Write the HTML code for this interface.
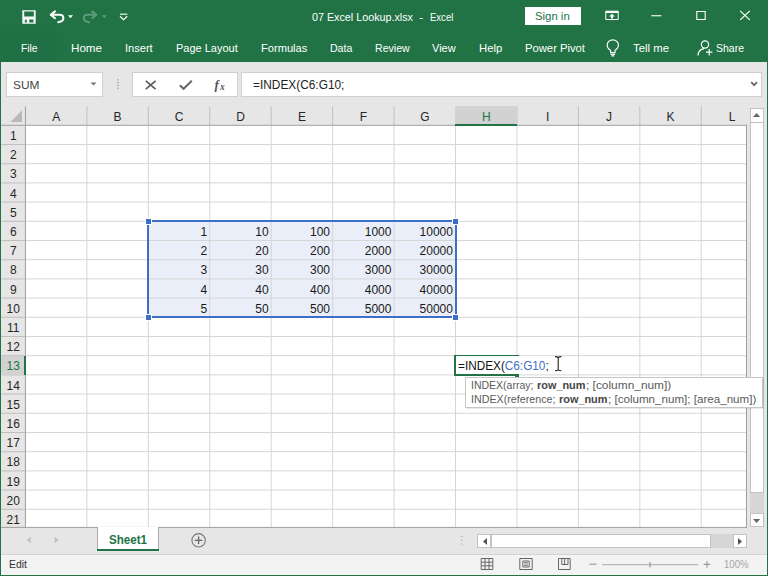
<!DOCTYPE html>
<html><head><meta charset="utf-8"><title>07 Excel Lookup.xlsx - Excel</title>
<style>
html,body{margin:0;padding:0;}
body{width:768px;height:576px;overflow:hidden;background:#e6e6e6;font-family:"Liberation Sans",sans-serif;position:relative;}
.abs,.t,.hl,.ch,.rh,.num{position:absolute;}
.t{white-space:nowrap;line-height:16px;transform-origin:0 0;}
.hl{background:#d6d6d6;}
.ch{height:16px;font-size:12px;line-height:16px;text-align:center;color:#262626;}
.rh{left:1.3px;width:24px;font-size:12px;line-height:16px;text-align:center;color:#262626;}
.num{font-size:12px;line-height:16px;text-align:right;color:#1a1a1a;white-space:nowrap;}
svg{position:absolute;overflow:visible;}
</style></head><body>

<div class="abs" style="left:0;top:0;width:768px;height:61.5px;background:#217346;"></div>
<div class="abs" style="left:1.3px;top:31px;width:56px;height:30.5px;background:#1f7044;"></div>
<div class="abs" style="left:525.3px;top:6.7px;width:55.4px;height:18px;background:#fff;"></div>
<div class="abs" style="left:6px;top:72px;width:97px;height:25px;background:#fff;border:1px solid #cfcfcf;box-sizing:border-box;"></div>
<div class="abs" style="left:132px;top:72px;width:106px;height:25px;background:#fff;border:1px solid #cfcfcf;box-sizing:border-box;"></div>
<div class="abs" style="left:241px;top:72px;width:521px;height:25px;background:#fff;border:1px solid #cfcfcf;box-sizing:border-box;"></div>
<div class="abs" style="left:25.44px;top:125.3px;width:721.06px;height:402.09999999999997px;background:#fff;"></div>
<div class="abs" style="left:148.32px;top:221.3px;width:307.2px;height:96.0px;background:#e9eef8;"></div>
<svg style="left:0;top:0" width="768" height="576" viewBox="0 0 768 576"><g stroke="#d4d4d4" stroke-width="0.96" fill="none"><path d="M86.88 125.3V527.4"/><path d="M148.32 125.3V527.4"/><path d="M209.76 125.3V527.4"/><path d="M271.20 125.3V527.4"/><path d="M332.64 125.3V527.4"/><path d="M394.08 125.3V527.4"/><path d="M455.52 125.3V527.4"/><path d="M516.96 125.3V527.4"/><path d="M578.40 125.3V527.4"/><path d="M639.84 125.3V527.4"/><path d="M701.28 125.3V527.4"/><path d="M25.44 144.50H746.5"/><path d="M25.44 163.70H746.5"/><path d="M25.44 182.90H746.5"/><path d="M25.44 202.10H746.5"/><path d="M25.44 221.30H746.5"/><path d="M25.44 240.50H746.5"/><path d="M25.44 259.70H746.5"/><path d="M25.44 278.90H746.5"/><path d="M25.44 298.10H746.5"/><path d="M25.44 317.30H746.5"/><path d="M25.44 336.50H746.5"/><path d="M25.44 355.70H746.5"/><path d="M25.44 374.90H746.5"/><path d="M25.44 394.10H746.5"/><path d="M25.44 413.30H746.5"/><path d="M25.44 432.50H746.5"/><path d="M25.44 451.70H746.5"/><path d="M25.44 470.90H746.5"/><path d="M25.44 490.10H746.5"/><path d="M25.44 509.30H746.5"/></g><g stroke="#9f9f9f" stroke-width="1" fill="none"><path d="M1.3 125.3H746.5"/><path d="M25.44 106.5V527.4"/><path d="M746.5 124.8V527.9"/><path d="M1.3 527.4H746.5"/></g><g stroke="#bdbdbd" stroke-width="0.96" fill="none"><path d="M86.88 106.5V125.3"/><path d="M148.32 106.5V125.3"/><path d="M209.76 106.5V125.3"/><path d="M271.20 106.5V125.3"/><path d="M332.64 106.5V125.3"/><path d="M394.08 106.5V125.3"/><path d="M455.52 106.5V125.3"/><path d="M516.96 106.5V125.3"/><path d="M578.40 106.5V125.3"/><path d="M639.84 106.5V125.3"/><path d="M701.28 106.5V125.3"/><path d="M1.3 144.50H25.44"/><path d="M1.3 163.70H25.44"/><path d="M1.3 182.90H25.44"/><path d="M1.3 202.10H25.44"/><path d="M1.3 221.30H25.44"/><path d="M1.3 240.50H25.44"/><path d="M1.3 259.70H25.44"/><path d="M1.3 278.90H25.44"/><path d="M1.3 298.10H25.44"/><path d="M1.3 317.30H25.44"/><path d="M1.3 336.50H25.44"/><path d="M1.3 355.70H25.44"/><path d="M1.3 374.90H25.44"/><path d="M1.3 394.10H25.44"/><path d="M1.3 413.30H25.44"/><path d="M1.3 432.50H25.44"/><path d="M1.3 451.70H25.44"/><path d="M1.3 470.90H25.44"/><path d="M1.3 490.10H25.44"/><path d="M1.3 509.30H25.44"/></g></svg>
<div class="abs" style="left:455.21999999999997px;top:106.3px;width:61.739999999999995px;height:18px;background:#d2d2d2;"></div>
<div class="abs" style="left:455.21999999999997px;top:124px;width:61.739999999999995px;height:1.8px;background:#217346;"></div>
<div class="ch" style="left:25.44px;top:108.54px;width:61.44px;color:#262626">A</div>
<div class="ch" style="left:86.88px;top:108.54px;width:61.44px;color:#262626">B</div>
<div class="ch" style="left:148.32px;top:108.54px;width:61.44px;color:#262626">C</div>
<div class="ch" style="left:209.76px;top:108.54px;width:61.44px;color:#262626">D</div>
<div class="ch" style="left:271.20px;top:108.54px;width:61.44px;color:#262626">E</div>
<div class="ch" style="left:332.64px;top:108.54px;width:61.44px;color:#262626">F</div>
<div class="ch" style="left:394.08px;top:108.54px;width:61.44px;color:#262626">G</div>
<div class="ch" style="left:455.52px;top:108.54px;width:61.44px;color:#217346">H</div>
<div class="ch" style="left:516.96px;top:108.54px;width:61.44px;color:#262626">I</div>
<div class="ch" style="left:578.40px;top:108.54px;width:61.44px;color:#262626">J</div>
<div class="ch" style="left:639.84px;top:108.54px;width:61.44px;color:#262626">K</div>
<div class="ch" style="left:701.28px;top:108.54px;width:61.44px;color:#262626">L</div>
<svg style="left:10px;top:110px" width="13" height="13" viewBox="0 0 13 13"><path d="M12 0.5V12H0.5Z" fill="#b8b8b8"/></svg>
<div class="abs" style="left:1.3px;top:355.7px;width:23px;height:19.2px;background:#d2d2d2;"></div>
<div class="abs" style="left:24px;top:355.7px;width:1.8px;height:19.2px;background:#217346;"></div>
<div class="rh" style="top:127.94px;color:#262626">1</div>
<div class="rh" style="top:147.14px;color:#262626">2</div>
<div class="rh" style="top:166.34px;color:#262626">3</div>
<div class="rh" style="top:185.54px;color:#262626">4</div>
<div class="rh" style="top:204.74px;color:#262626">5</div>
<div class="rh" style="top:223.94px;color:#262626">6</div>
<div class="rh" style="top:243.14px;color:#262626">7</div>
<div class="rh" style="top:262.34px;color:#262626">8</div>
<div class="rh" style="top:281.54px;color:#262626">9</div>
<div class="rh" style="top:300.74px;color:#262626">10</div>
<div class="rh" style="top:319.94px;color:#262626">11</div>
<div class="rh" style="top:339.14px;color:#262626">12</div>
<div class="rh" style="top:358.34px;color:#217346">13</div>
<div class="rh" style="top:377.54px;color:#262626">14</div>
<div class="rh" style="top:396.74px;color:#262626">15</div>
<div class="rh" style="top:415.94px;color:#262626">16</div>
<div class="rh" style="top:435.14px;color:#262626">17</div>
<div class="rh" style="top:454.34px;color:#262626">18</div>
<div class="rh" style="top:473.54px;color:#262626">19</div>
<div class="rh" style="top:492.74px;color:#262626">20</div>
<div class="rh" style="top:511.94px;color:#262626">21</div>
<div class="num" style="left:148.32px;width:58.839999999999996px;top:223.94px;">1</div>
<div class="num" style="left:209.76px;width:58.839999999999996px;top:223.94px;">10</div>
<div class="num" style="left:271.20px;width:58.839999999999996px;top:223.94px;">100</div>
<div class="num" style="left:332.64px;width:58.839999999999996px;top:223.94px;">1000</div>
<div class="num" style="left:394.08px;width:58.839999999999996px;top:223.94px;">10000</div>
<div class="num" style="left:148.32px;width:58.839999999999996px;top:243.14px;">2</div>
<div class="num" style="left:209.76px;width:58.839999999999996px;top:243.14px;">20</div>
<div class="num" style="left:271.20px;width:58.839999999999996px;top:243.14px;">200</div>
<div class="num" style="left:332.64px;width:58.839999999999996px;top:243.14px;">2000</div>
<div class="num" style="left:394.08px;width:58.839999999999996px;top:243.14px;">20000</div>
<div class="num" style="left:148.32px;width:58.839999999999996px;top:262.34px;">3</div>
<div class="num" style="left:209.76px;width:58.839999999999996px;top:262.34px;">30</div>
<div class="num" style="left:271.20px;width:58.839999999999996px;top:262.34px;">300</div>
<div class="num" style="left:332.64px;width:58.839999999999996px;top:262.34px;">3000</div>
<div class="num" style="left:394.08px;width:58.839999999999996px;top:262.34px;">30000</div>
<div class="num" style="left:148.32px;width:58.839999999999996px;top:281.54px;">4</div>
<div class="num" style="left:209.76px;width:58.839999999999996px;top:281.54px;">40</div>
<div class="num" style="left:271.20px;width:58.839999999999996px;top:281.54px;">400</div>
<div class="num" style="left:332.64px;width:58.839999999999996px;top:281.54px;">4000</div>
<div class="num" style="left:394.08px;width:58.839999999999996px;top:281.54px;">40000</div>
<div class="num" style="left:148.32px;width:58.839999999999996px;top:300.74px;">5</div>
<div class="num" style="left:209.76px;width:58.839999999999996px;top:300.74px;">50</div>
<div class="num" style="left:271.20px;width:58.839999999999996px;top:300.74px;">500</div>
<div class="num" style="left:332.64px;width:58.839999999999996px;top:300.74px;">5000</div>
<div class="num" style="left:394.08px;width:58.839999999999996px;top:300.74px;">50000</div>
<div class="abs" style="left:146.92px;top:219.9px;width:309.59999999999997px;height:98.4px;border:2px solid #3f6fc4;box-sizing:border-box;"></div>
<div class="abs" style="left:144.82px;top:217.8px;width:7px;height:7px;background:#3f6fc4;border:0.8px solid #fff;box-sizing:border-box;"></div>
<div class="abs" style="left:452.02px;top:217.8px;width:7px;height:7px;background:#3f6fc4;border:0.8px solid #fff;box-sizing:border-box;"></div>
<div class="abs" style="left:144.82px;top:313.8px;width:7px;height:7px;background:#3f6fc4;border:0.8px solid #fff;box-sizing:border-box;"></div>
<div class="abs" style="left:452.02px;top:313.8px;width:7px;height:7px;background:#3f6fc4;border:0.8px solid #fff;box-sizing:border-box;"></div>
<div class="abs" style="left:456.02px;top:356.2px;width:100px;height:18.2px;background:#fff;"></div>
<div class="abs" style="left:454.21999999999997px;top:354.7px;width:64.3px;height:1.8px;background:#217346;"></div>
<div class="abs" style="left:454.21999999999997px;top:373.9px;width:60.7px;height:1.8px;background:#217346;"></div>
<div class="abs" style="left:454.21999999999997px;top:354.7px;width:1.9px;height:21.0px;background:#217346;"></div>
<div class="abs" style="left:514.7px;top:374.3px;width:4.6px;height:3px;background:#217346;"></div>
<div class="abs" style="left:750px;top:108.3px;width:13.7px;height:419.2px;background:#d6d6d6;"></div>
<div class="abs" style="left:750px;top:108.3px;width:13.7px;height:14.5px;background:#fff;border:1px solid #c2c2c2;box-sizing:border-box;"></div>
<div class="abs" style="left:750px;top:122.3px;width:13.7px;height:370.4px;background:#fff;border:1px solid #c2c2c2;box-sizing:border-box;"></div>
<div class="abs" style="left:750px;top:513.3px;width:13.7px;height:14.2px;background:#fff;border:1px solid #c2c2c2;box-sizing:border-box;"></div>
<svg style="left:753.3px;top:113px" width="7.2" height="4" viewBox="0 0 7.2 4"><path d="M0 4L3.6 0L7.2 4Z" fill="#666"/></svg>
<svg style="left:753.3px;top:518.7px" width="7.2" height="4" viewBox="0 0 7.2 4"><path d="M0 0L3.6 4L7.2 0Z" fill="#666"/></svg>
<div class="abs" style="left:465.3px;top:377.3px;width:298.2px;height:30.7px;background:#fff;border:1px solid #c6c6c6;box-sizing:border-box;box-shadow:0.5px 0.5px 1.5px rgba(0,0,0,.25);"></div>
<div class="abs" style="left:97.2px;top:526.6999999999999px;width:61.8px;height:22px;background:#fff;border-left:1px solid #ababab;border-right:1px solid #ababab;box-sizing:border-box;"></div>
<div class="abs" style="left:97.2px;top:548.7px;width:61.8px;height:2.1px;background:#217346;"></div>
<div class="abs" style="left:1.3px;top:553.5px;width:765.4px;height:1.2px;background:#d4d4d4;"></div>
<div class="abs" style="left:1.3px;top:554.5px;width:765.4px;height:20.2px;background:#f3f3f3;"></div>
<div class="abs" style="left:477.3px;top:534px;width:269.4px;height:14px;background:#d6d6d6;"></div>
<div class="abs" style="left:477.3px;top:534px;width:14px;height:14px;background:#fff;border:1px solid #c2c2c2;box-sizing:border-box;"></div>
<div class="abs" style="left:490.8px;top:534px;width:220px;height:14px;background:#fff;border:1px solid #c2c2c2;box-sizing:border-box;"></div>
<div class="abs" style="left:732.7px;top:534px;width:14px;height:14px;background:#fff;border:1px solid #c2c2c2;box-sizing:border-box;"></div>
<svg style="left:482.5px;top:537.5px" width="4" height="7" viewBox="0 0 4 7"><path d="M4 0L0 3.5L4 7Z" fill="#555"/></svg>
<svg style="left:738px;top:537.5px" width="4" height="7" viewBox="0 0 4 7"><path d="M0 0L4 3.5L0 7Z" fill="#555"/></svg>
<div class="t" style="left:20.70px;top:40.05px;font-size:11.4px;color:#fff;font-weight:400;transform:scaleX(0.9042)">File</div>
<div class="t" style="left:70.70px;top:40.05px;font-size:11.4px;color:#fff;font-weight:400;transform:scaleX(1.0201)">Home</div>
<div class="t" style="left:125.00px;top:40.05px;font-size:11.4px;color:#fff;font-weight:400;transform:scaleX(0.9719)">Insert</div>
<div class="t" style="left:176.00px;top:40.05px;font-size:11.4px;color:#fff;font-weight:400;transform:scaleX(0.9645)">Page Layout</div>
<div class="t" style="left:260.70px;top:40.05px;font-size:11.4px;color:#fff;font-weight:400;transform:scaleX(0.9751)">Formulas</div>
<div class="t" style="left:330.00px;top:40.05px;font-size:11.4px;color:#fff;font-weight:400;transform:scaleX(0.9268)">Data</div>
<div class="t" style="left:375.00px;top:40.05px;font-size:11.4px;color:#fff;font-weight:400;transform:scaleX(0.9288)">Review</div>
<div class="t" style="left:432.00px;top:40.05px;font-size:11.4px;color:#fff;font-weight:400;transform:scaleX(0.9680)">View</div>
<div class="t" style="left:478.70px;top:40.05px;font-size:11.4px;color:#fff;font-weight:400;transform:scaleX(0.9941)">Help</div>
<div class="t" style="left:524.70px;top:40.05px;font-size:11.4px;color:#fff;font-weight:400;transform:scaleX(0.9871)">Power Pivot</div>
<div class="t" style="left:632.70px;top:40.05px;font-size:11.4px;color:#fff;font-weight:400;transform:scaleX(0.9974)">Tell me</div>
<div class="t" style="left:716.00px;top:40.05px;font-size:11.4px;color:#fff;font-weight:400;transform:scaleX(0.9209)">Share</div>
<div class="t" style="left:312.00px;top:8.78px;font-size:11.3px;color:#fff;font-weight:400;transform:scaleX(0.9517)">07 Excel Lookup.xlsx</div>
<div class="t" style="left:418.70px;top:8.78px;font-size:11.3px;color:#fff;font-weight:400;transform:scaleX(1.1419)">-</div>
<div class="t" style="left:430.00px;top:8.78px;font-size:11.3px;color:#fff;font-weight:400;transform:scaleX(0.8434)">Excel</div>
<div class="t" style="left:535.30px;top:8.05px;font-size:11.4px;color:#217346;font-weight:400;transform:scaleX(0.9959)">Sign in</div>
<div class="t" style="left:12.50px;top:77.05px;font-size:11.4px;color:#444;font-weight:400;transform:scaleX(1.0469)">SUM</div>
<div class="t" style="left:253.30px;top:77.14px;font-size:12px;color:#222;font-weight:400;transform:scaleX(0.9894)">=INDEX(C6:G10;</div>
<div class="t" style="left:458.30px;top:358.14px;font-size:12px;color:#111;font-weight:400;transform:scaleX(0.9817)">=INDEX(<span style="color:#3f6fc4">C6:G10</span>;</div>
<div class="t" style="left:470.60px;top:376.75px;font-size:11.4px;color:#5a5a5a;font-weight:400;transform:scaleX(0.9212)">INDEX(array;</div>
<div class="t" style="left:537.00px;top:376.75px;font-size:11.4px;color:#444;font-weight:700;transform:scaleX(0.9577)">row_num</div>
<div class="t" style="left:586.20px;top:376.75px;font-size:11.4px;color:#5a5a5a;font-weight:400;transform:scaleX(1.0444)">; [column_num])</div>
<div class="t" style="left:470.60px;top:391.05px;font-size:11.4px;color:#5a5a5a;font-weight:400;transform:scaleX(0.9389)">INDEX(reference;</div>
<div class="t" style="left:559.00px;top:391.05px;font-size:11.4px;color:#444;font-weight:700;transform:scaleX(0.9577)">row_num</div>
<div class="t" style="left:608.20px;top:391.05px;font-size:11.4px;color:#5a5a5a;font-weight:400;transform:scaleX(1.0184)">; [column_num]; [area_num])</div>
<div class="t" style="left:108.70px;top:531.84px;font-size:12px;color:#217346;font-weight:700;transform:scaleX(0.9655)">Sheet1</div>
<div class="t" style="left:9.30px;top:555.63px;font-size:10.6px;color:#333;font-weight:400;transform:scaleX(0.9855)">Edit</div>
<div class="t" style="left:724.00px;top:555.63px;font-size:10.6px;color:#a6a6a6;font-weight:400;transform:scaleX(0.9111)">100%</div>
<!-- save -->
<svg style="left:0;top:0" width="768" height="64" viewBox="0 0 768 64">
<path fill="#fff" fill-rule="evenodd" d="M22.3 10.3H35.7V23.7H22.3Z M24.2 11.6V16.6H33.8V11.6Z M24.9 19.8V22.5H26.8V19.8Z M29.3 19.6V22.5H33.4V19.6Z" opacity="0.95"/>
<!-- undo -->
<g fill="none" stroke="#fff" stroke-width="2" stroke-linecap="round" stroke-linejoin="round">
<path d="M55 11.4L50.8 14.8L55 18.2"/>
<path d="M51.2 14.8H59.2C61.8 14.8 63.4 16.2 63.4 18.2C63.4 20.2 61.6 21.7 58.2 22.2"/>
</g>
<path d="M68 15.3H73L70.5 18.2Z" fill="#fff"/>
<!-- redo dim -->
<g fill="none" stroke="#5e9b7c" stroke-width="2" stroke-linecap="round" stroke-linejoin="round">
<path d="M92.2 11.4L96.4 14.8L92.2 18.2"/>
<path d="M96 14.8H88C85.4 14.8 83.8 16.2 83.8 18.2C83.8 20.2 85.6 21.7 89 22.2"/>
</g>
<path d="M101.8 15.3H106.8L104.3 18.2Z" fill="#5e9b7c"/>
<!-- customize -->
<path d="M119.9 13.6H127.3V14.7H119.9Z" fill="#fff"/>
<path d="M120 16.3L123.6 19.6L127.2 16.3" fill="none" stroke="#fff" stroke-width="1.2"/>
<!-- ribbon display -->
<path fill="none" stroke="#fff" stroke-width="1" d="M605.8 11.2H618.2V19.5H605.8Z"/>
<path fill="#fff" d="M605.8 11.2H618.2V13H605.8Z"/>
<path fill="#fff" d="M612 13.8L615 16.4H613V18.6H611V16.4H609Z"/>
<!-- minimize -->
<path d="M651.3 15.2H661.3V16.3H651.3Z" fill="#fff"/>
<!-- maximize -->
<path d="M696.8 11.5H705.2V19.5H696.8Z" fill="none" stroke="#fff" stroke-width="1.1"/>
<!-- close -->
<path d="M740.2 10.9L749.8 19.9M749.8 10.9L740.2 19.9" fill="none" stroke="#fff" stroke-width="1.2"/>
<!-- bulb -->
<g fill="none" stroke="#fff" stroke-width="1.15">
<path d="M610.6 52.6V50.2C608.4 49.2 607.2 47.2 607.2 45.1C607.2 42.2 609.6 39.9 612.8 39.9C616 39.9 618.4 42.2 618.4 45.1C618.4 47.2 617.2 49.2 615 50.2V52.6Z"/>
<path d="M610.6 54.3H615M611.4 55.9H614.2"/>
</g>
<!-- share person -->
<g fill="none" stroke="#fff" stroke-width="1.2">
<circle cx="705" cy="44.5" r="3.6"/>
<path d="M698 55.5C698.3 51.5 700.5 49.3 704 48.7"/>
<path d="M706 52.2H712.4M709.2 49V55.4"/>
</g>
</svg>
<!-- formula bar icons -->
<svg style="left:0;top:64px" width="768" height="40" viewBox="0 64 768 40">
<path d="M90.5 82.6H96.5L93.5 85.4Z" fill="#777"/>
<g fill="#999"><rect x="117.4" y="79.2" width="1.3" height="1.3"/><rect x="117.4" y="82" width="1.3" height="1.3"/><rect x="117.4" y="84.8" width="1.3" height="1.3"/><rect x="117.4" y="87.6" width="1.3" height="1.3"/></g>
<path d="M145.8 80.8L155.6 89.2M155.6 80.8L145.8 89.2" stroke="#5c5c5c" stroke-width="1.6" fill="none"/>
<path d="M179.8 85.3L183.6 88.8L191.8 80.8" stroke="#666" stroke-width="2" fill="none"/>
<text x="214.5" y="89" font-family="Liberation Serif" font-style="italic" font-weight="bold" font-size="13" fill="#555">f</text>
<text x="220" y="89.5" font-family="Liberation Serif" font-style="italic" font-weight="bold" font-size="9.5" fill="#555">x</text>
<path d="M751.2 82.2L754.1 85.2L757 82.2" stroke="#666" stroke-width="1.7" fill="none"/>
</svg>
<!-- I-beam cursor -->
<svg style="left:0;top:340px" width="768" height="50" viewBox="0 340 768 50">
<path d="M555 356.6C556.8 356.6 557.8 357 558.2 357.6C558.6 357 559.6 356.6 561.4 356.6M558.2 357.6V369.8M555 370.8C556.8 370.8 557.8 370.4 558.2 369.8C558.6 370.4 559.6 370.8 561.4 370.8" stroke="#222" stroke-width="1.1" fill="none"/>
</svg>
<!-- bottom icons -->
<svg style="left:0;top:526px" width="768" height="50" viewBox="0 526 768 50">
<path d="M30.7 536.7V543.3L26.7 540Z" fill="#c0c0c0"/>
<path d="M54.7 536.7V543.3L58.7 540Z" fill="#c0c0c0"/>
<circle cx="198.6" cy="540.3" r="6.7" fill="none" stroke="#777" stroke-width="1.1"/>
<path d="M194.8 540.3H202.4M198.6 536.5V544.1" stroke="#666" stroke-width="1.3"/>
<g fill="#aaa"><rect x="461.2" y="536" width="1.2" height="1.2"/><rect x="461.2" y="539.7" width="1.2" height="1.2"/><rect x="461.2" y="543.4" width="1.2" height="1.2"/></g>
<!-- view icons -->
<g fill="none" stroke="#666" stroke-width="1">
<path d="M481.2 558.5H492.8V569.5H481.2Z M481.2 562.2H492.8M481.2 565.8H492.8M485 558.5V569.5M489 558.5V569.5"/>
<path d="M519.8 558.5H532.2V569.5H519.8Z M522.8 561H529.2V567H522.8Z"/>
<path d="M524 562.5H528M524 564H528M524 565.5H528" stroke-width="0.7"/>
<path d="M558.5 558.5H570.2V569.5H558.5Z M561.8 558.5V564.5H568V558.5M564.6 558.5V564.5"/>
</g>
<path d="M589.3 564.2H596.6" stroke="#999" stroke-width="1.1"/>
<path d="M602 564.7H698" stroke="#aaa" stroke-width="1"/>
<path d="M650 562V567.3" stroke="#888" stroke-width="1"/>
<path d="M703.6 564.4H710.4M707 561V567.8" stroke="#999" stroke-width="1.1"/>
</svg>

<div class="abs" style="left:0;top:0;width:1.3px;height:576px;background:#217346;"></div>
<div class="abs" style="left:766.7px;top:0;width:1.3px;height:576px;background:#217346;"></div>
<div class="abs" style="left:0;top:574.6px;width:768px;height:1.4px;background:#217346;"></div>
</body></html>
